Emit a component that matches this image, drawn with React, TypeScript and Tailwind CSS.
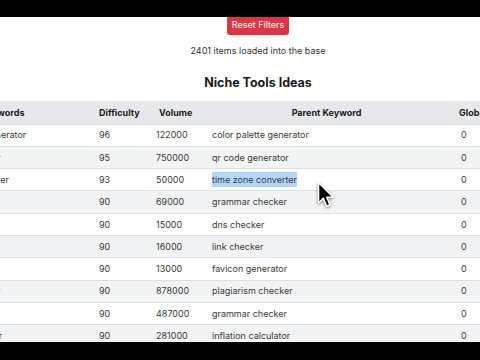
import React from "react";

type Row = {
  keyword: string;
  difficulty: number;
  volume: number;
  parent: string;
  global: number;
};

const rows: Row[] = [
  { keyword: "colour palette generator", difficulty: 96, volume: 122000, parent: "color palette generator", global: 0 },
  { keyword: "qr code generator", difficulty: 95, volume: 750000, parent: "qr code generator", global: 0 },
  { keyword: "time zone converter", difficulty: 93, volume: 50000, parent: "time zone converter", global: 0 },
  { keyword: "grammar check", difficulty: 90, volume: 69000, parent: "grammar checker", global: 0 },
  { keyword: "dns lookup", difficulty: 90, volume: 15000, parent: "dns checker", global: 0 },
  { keyword: "link checker", difficulty: 90, volume: 16000, parent: "link checker", global: 0 },
  { keyword: "favicon maker", difficulty: 90, volume: 13000, parent: "favicon generator", global: 0 },
  { keyword: "plagiarism tracker", difficulty: 90, volume: 878000, parent: "plagiarism checker", global: 0 },
  { keyword: "grammar check", difficulty: 90, volume: 487000, parent: "grammar checker", global: 0 },
  { keyword: "inflation calculator", difficulty: 90, volume: 281000, parent: "inflation calculator", global: 0 },
];

function Cursor() {
  return (
    <svg
      className="absolute left-[316px] top-[163px] drop-shadow-[0_1px_1.5px_rgba(0,0,0,0.45)]"
      width="20"
      height="30"
      viewBox="0 0 20 30"
    >
      <path
        d="M2.5 2.5 L2.5 23 L7.3 18.4 L10.6 26.2 L14 24.8 L10.8 17.2 L17.2 17.2 Z"
        fill="black"
        stroke="white"
        strokeWidth="1.6"
        strokeLinejoin="round"
      />
    </svg>
  );
}

export default function App() {
  return (
    <div className="w-[480px] h-[360px] bg-black flex flex-col overflow-hidden font-['Inter','Noto_Sans',sans-serif]">
      <div className="h-[17px] shrink-0 bg-black" />

      <main className="relative h-[325px] shrink-0 bg-white overflow-hidden">
        <div className="w-[516px] flex flex-col items-center">
          <button className="-mt-[6px] h-[24px] px-[4.5px] pt-[4px] bg-[#dc3545] text-white text-[9px] rounded-[3px] leading-[12px]">
            Reset Filters
          </button>
          <p className="mt-[10px] text-[9px] leading-[12px] text-[#333]">
            2401 items loaded into the base
          </p>
          <h2 className="mt-[17px] text-[12.5px] leading-[18px] font-bold text-[#1a1a1a]">
            Niche Tools Ideas
          </h2>
        </div>

        <div className="mt-[9px] overflow-hidden">
          <table className="-ml-[85px] w-[655px] table-fixed border-collapse text-[9px]">
            <colgroup>
              <col className="w-[175px]" />
              <col className="w-[57px]" />
              <col className="w-[56px]" />
              <col className="w-[247px]" />
              <col className="w-[120px]" />
            </colgroup>
            <thead>
              <tr className="h-[23px] bg-[#e6e8eb] text-[#1a1a1a]">
                <th className="px-[9px] font-bold text-center">Keywords</th>
                <th className="px-[9px] font-bold text-left">Difficulty</th>
                <th className="px-[9px] pl-[12px] font-bold text-left">Volume</th>
                <th className="px-[9px] font-bold text-center">Parent Keyword</th>
                <th className="px-[9px] font-bold text-left whitespace-nowrap">Global Volume</th>
              </tr>
            </thead>
            <tbody className="text-[#3a3a3a]">
              {rows.map((r, i) => (
                <tr
                  key={i}
                  className={`h-[22.3px] border-t border-[#dcdfe3] ${i % 2 === 1 ? "bg-[#f2f3f5]" : "bg-white"}`}
                >
                  <td className="px-[9px] whitespace-nowrap">{r.keyword}</td>
                  <td className="px-[9px]">{r.difficulty}</td>
                  <td className="px-[9px]">{r.volume}</td>
                  <td className="px-[9px] whitespace-nowrap">
                    {i === 2 ? (
                      <span className="bg-[#b4d5fb] py-[2px]">{r.parent}</span>
                    ) : (
                      r.parent
                    )}
                  </td>
                  <td className="px-[9px] pl-[11px]">{r.global}</td>
                </tr>
              ))}
            </tbody>
          </table>
        </div>

        <Cursor />
      </main>

      <div className="flex-1 bg-black" />
    </div>
  );
}
